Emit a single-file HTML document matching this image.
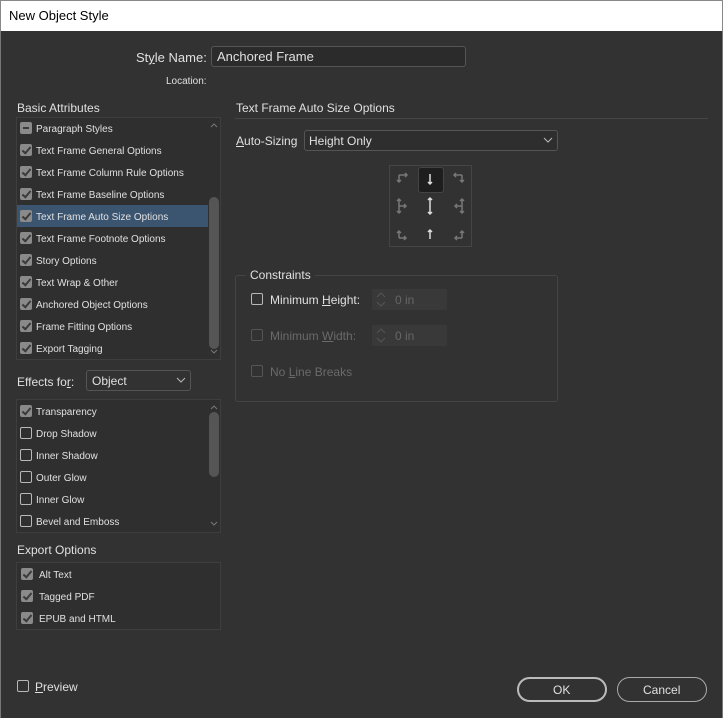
<!DOCTYPE html>
<html><head><style>
*{margin:0;padding:0;box-sizing:border-box}
body{width:723px;height:718px;background:#323232;font-family:"Liberation Sans",sans-serif;color:#e0e0e0;position:relative;overflow:hidden}
.a{position:absolute;white-space:nowrap}
.t{font-size:12px}
.s{font-size:10px}
.cb{position:absolute;width:12px;height:12px;border-radius:2px;background:#8a8a8a}
.cb::after{content:"";position:absolute;left:4px;top:1px;width:3px;height:7px;border:solid #3a3a3a;border-width:0 2px 2px 0;transform:rotate(40deg)}
.ub{position:absolute;width:12px;height:12px;border:1px solid #b8b8b8;border-radius:2px}
.box{position:absolute;border:1px solid #3e3e3e;background:#2f2f2f}
.sb{position:absolute;width:10px;border-radius:5px;background:#555}
.ls{top:2px}
</style></head><body>
<div class="a" style="left:0;top:0;width:723px;height:31px;background:#fff;border:1px solid #888;border-bottom:none"></div>
<div class="a" style="left:9px;top:8px;font-size:13px;color:#000">New Object Style</div>
<div class="a" style="left:0;top:31px;width:1px;height:687px;background:#777"></div>
<div class="a" style="left:722px;top:31px;width:1px;height:687px;background:#777"></div>

<div class="a" style="left:136px;top:50px;font-size:13px">St<u>y</u>le Name:</div>
<div class="a" style="left:211px;top:46px;width:255px;height:21px;border:1px solid #555;border-radius:3px;background:#2b2b2b"></div>
<div class="a" style="left:217px;top:49px;font-size:13px">Anchored Frame</div>
<div class="a s" style="left:166px;top:76px">Location:</div>

<div class="a t" style="left:17px;top:101px">Basic Attributes</div>
<div class="box" style="left:16px;top:117px;width:205px;height:243px"></div>
<div class="a" style="left:17px;top:205px;width:191px;height:22px;background:#3b5571"></div>
<div class="sb" style="left:209px;top:197px;height:152px"></div>
<div class="a" style="left:20px;top:122px;width:12px;height:12px;background:#8a8a8a;border-radius:2px"></div>
<div class="a" style="left:23px;top:127px;width:6px;height:2px;background:#3a3a3a"></div>
<div class="a s" style="left:36px;top:124px">Paragraph Styles</div>
<div class="cb" style="left:20px;top:144px"></div><div class="a s" style="left:36px;top:146px">Text Frame General Options</div>
<div class="cb" style="left:20px;top:166px"></div><div class="a s" style="left:36px;top:168px">Text Frame Column Rule Options</div>
<div class="cb" style="left:20px;top:188px"></div><div class="a s" style="left:36px;top:190px">Text Frame Baseline Options</div>
<div class="cb" style="left:20px;top:210px"></div><div class="a s" style="left:36px;top:212px">Text Frame Auto Size Options</div>
<div class="cb" style="left:20px;top:232px"></div><div class="a s" style="left:36px;top:234px">Text Frame Footnote Options</div>
<div class="cb" style="left:20px;top:254px"></div><div class="a s" style="left:36px;top:256px">Story Options</div>
<div class="cb" style="left:20px;top:276px"></div><div class="a s" style="left:36px;top:278px">Text Wrap &amp; Other</div>
<div class="cb" style="left:20px;top:298px"></div><div class="a s" style="left:36px;top:300px">Anchored Object Options</div>
<div class="cb" style="left:20px;top:320px"></div><div class="a s" style="left:36px;top:322px">Frame Fitting Options</div>
<div class="cb" style="left:20px;top:342px"></div><div class="a s" style="left:36px;top:344px">Export Tagging</div>
<svg class="a" style="left:209px;top:120px" width="10" height="240" fill="none" stroke="#777"><path d="M2 7l3-3 3 3M2 230l3 3 3-3"/></svg>

<div class="a t" style="left:17px;top:375px">Effects fo<u>r</u>:</div>
<div class="a" style="left:86px;top:370px;width:105px;height:21px;border:1px solid #555;border-radius:3px"></div>
<div class="a t" style="left:92px;top:374px">Object</div>
<svg class="a" style="left:176px;top:377px" width="10" height="6" fill="none" stroke="#bbb"><path d="M1 1l4 4 4-4"/></svg>
<div class="box" style="left:16px;top:399px;width:205px;height:134px"></div>
<div class="sb" style="left:209px;top:412px;height:65px"></div>
<svg class="a" style="left:209px;top:402px" width="10" height="130" fill="none" stroke="#777"><path d="M2 7l3-3 3 3M2 120l3 3 3-3"/></svg>
<div class="cb" style="left:20px;top:405px"></div><div class="a s" style="left:36px;top:407px">Transparency</div>
<div class="ub" style="left:20px;top:427px"></div><div class="a s" style="left:36px;top:429px">Drop Shadow</div>
<div class="ub" style="left:20px;top:449px"></div><div class="a s" style="left:36px;top:451px">Inner Shadow</div>
<div class="ub" style="left:20px;top:471px"></div><div class="a s" style="left:36px;top:473px">Outer Glow</div>
<div class="ub" style="left:20px;top:493px"></div><div class="a s" style="left:36px;top:495px">Inner Glow</div>
<div class="ub" style="left:20px;top:515px"></div><div class="a s" style="left:36px;top:517px">Bevel and Emboss</div>

<div class="a t" style="left:17px;top:543px">Export Options</div>
<div class="box" style="left:16px;top:562px;width:205px;height:68px"></div>
<div class="cb" style="left:21px;top:568px"></div><div class="a s" style="left:39px;top:570px">Alt Text</div>
<div class="cb" style="left:21px;top:590px"></div><div class="a s" style="left:39px;top:592px">Tagged PDF</div>
<div class="cb" style="left:21px;top:612px"></div><div class="a s" style="left:39px;top:614px">EPUB and HTML</div>

<div class="a t" style="left:236px;top:101px">Text Frame Auto Size Options</div>
<div class="a" style="left:235px;top:118px;width:473px;height:1px;background:#454545"></div>
<div class="a t" style="left:236px;top:134px"><u>A</u>uto-Sizing</div>
<div class="a" style="left:304px;top:130px;width:254px;height:21px;border:1px solid #555;border-radius:3px;background:#2e2e2e"></div>
<div class="a t" style="left:309px;top:134px">Height Only</div>
<svg class="a" style="left:543px;top:137px" width="10" height="6" fill="none" stroke="#bbb"><path d="M1 1l4 4 4-4"/></svg>

<div class="a" style="left:389px;top:165px;width:83px;height:82px;border:1px solid #454545"></div>
<div class="a" style="left:418px;top:167px;width:26px;height:26px;background:#1e1e1e;border:1px solid #444;border-radius:3px"></div>
<svg class="a" style="left:389px;top:165px" width="83" height="82" viewBox="0 0 83 82" fill="none" stroke-width="1.5">
<g stroke="#777"><path d="M10 10h8M16 8l2 2-2 2M10 10v7M8 15l2 2 2-2"/>
<path d="M73 10h-8M67 8l-2 2 2 2M73 10v7M71 15l2 2 2-2"/>
<path d="M10 34v14M8 36l2-2 2 2M8 46l2 2 2-2M10 41h7M15 39l2 2-2 2"/>
<path d="M73 34v14M71 36l2-2 2 2M71 46l2 2 2-2M73 41h-7M68 39l-2 2 2 2"/>
<path d="M10 73v-7M8 68l2-2 2 2M10 73h7M15 71l2 2-2 2"/>
<path d="M73 73v-7M71 68l2-2 2 2M73 73h-7M68 71l-2 2 2 2"/></g>
<g stroke="#ddd"><path d="M41 9v10M39 17l2 2 2-2"/><path d="M41 33v16M39 35l2-2 2 2M39 47l2 2 2-2"/><path d="M41 74v-9M39 67l2-2 2 2"/></g>
</svg>

<div class="a" style="left:235px;top:275px;width:323px;height:127px;border:1px solid #444;border-radius:3px"></div>
<div class="a t" style="left:246px;top:268px;background:#323232;padding:0 4px">Constraints</div>
<div class="ub" style="left:251px;top:293px"></div>
<div class="a t" style="left:270px;top:293px">Minimum <u>H</u>eight:</div>
<div class="a" style="left:372px;top:289px;width:75px;height:21px;background:#393939;border-radius:2px"></div>
<svg class="a" style="left:376px;top:291px" width="10" height="17" fill="none" stroke="#555"><path d="M1 6l4-4 4 4M1 11l4 4 4-4"/></svg>
<div class="a t" style="left:395px;top:293px;color:#666">0 in</div>
<div class="ub" style="left:251px;top:329px;border-color:#555"></div>
<div class="a t" style="left:270px;top:329px;color:#6a6a6a">Minimum <u>W</u>idth:</div>
<div class="a" style="left:372px;top:325px;width:75px;height:21px;background:#393939;border-radius:2px"></div>
<svg class="a" style="left:376px;top:327px" width="10" height="17" fill="none" stroke="#555"><path d="M1 6l4-4 4 4M1 11l4 4 4-4"/></svg>
<div class="a t" style="left:395px;top:329px;color:#666">0 in</div>
<div class="ub" style="left:251px;top:365px;border-color:#555"></div>
<div class="a t" style="left:270px;top:365px;color:#6a6a6a">No <u>L</u>ine Breaks</div>

<div class="ub" style="left:17px;top:680px"></div>
<div class="a t" style="left:35px;top:680px"><u>P</u>review</div>
<div class="a" style="left:517px;top:677px;width:90px;height:25px;border:2px solid #bbb;border-radius:13px"></div>
<div class="a t" style="left:553px;top:683px">OK</div>
<div class="a" style="left:617px;top:677px;width:90px;height:25px;border:1px solid #aaa;border-radius:13px"></div>
<div class="a t" style="left:643px;top:683px">Cancel</div>
</body></html>
